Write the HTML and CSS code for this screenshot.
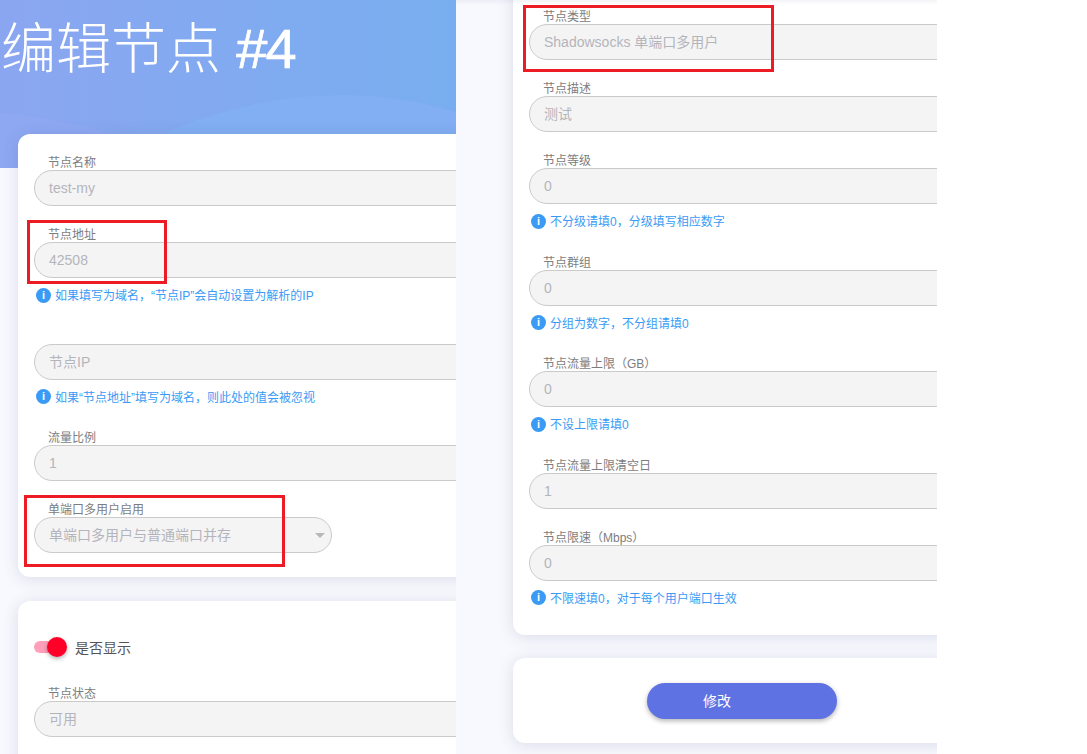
FILE: index.html
```html
<html>
  <head>
    <title>
      编辑节点
    </title>
    <link rel="stylesheet" href="styles.css">
  </head>

  <body>
    <div class="shot">
      <div class="pane pane-left">
        <div class="hero">
          <svg class="waves" width="456" height="168" viewBox="0 0 456 168">
            <path d="M0 113 C40 116 80 124 110 134 L110 168 L0 168 Z" fill="#8ea8f2"/>
            <path d="M163 134 C215 110 280 95 340 95 C385 95 425 102 456 112 L456 134 Z" fill="#82aef3"/>
          </svg>
          <h1 class="title">编辑节点 <b>#4</b></h1>
        </div>

        <div class="card card-first">
          <div class="field">
            <label>节点名称</label>
            <div class="input">test-my</div>
          </div>
          <div class="field">
            <label>节点地址</label>
            <div class="input">42508</div>
            <p class="hint"><span class="info">i</span>如果填写为域名，“节点IP”会自动设置为解析的IP</p>
          </div>
          <div class="field field-nolabel">
            <div class="input">节点IP</div>
            <p class="hint"><span class="info">i</span>如果“节点地址”填写为域名，则此处的值会被忽视</p>
          </div>
          <div class="field field-after-hint">
            <label>流量比例</label>
            <div class="input">1</div>
          </div>
          <div class="field">
            <label>单端口多用户启用</label>
            <div class="input input-select">单端口多用户与普通端口并存<span class="caret"></span></div>
          </div>
          <div class="mark mark-address"></div>
          <div class="mark mark-mu"></div>
        </div>

        <div class="card card-second">
          <div class="toggle-row">
            <span class="toggle"><span class="knob"></span></span>
            <span class="toggle-label">是否显示</span>
          </div>
          <div class="field">
            <label>节点状态</label>
            <div class="input">可用</div>
          </div>
        </div>
      </div>

      <div class="pane pane-right">
        <div class="card card-third">
          <div class="field">
            <label>节点类型</label>
            <div class="input">Shadowsocks 单端口多用户</div>
          </div>
          <div class="field">
            <label>节点描述</label>
            <div class="input">测试</div>
          </div>
          <div class="field">
            <label>节点等级</label>
            <div class="input">0</div>
            <p class="hint"><span class="info">i</span>不分级请填0，分级填写相应数字</p>
          </div>
          <div class="field field-after-hint">
            <label>节点群组</label>
            <div class="input">0</div>
            <p class="hint"><span class="info">i</span>分组为数字，不分组请填0</p>
          </div>
          <div class="field field-after-hint">
            <label>节点流量上限（GB）</label>
            <div class="input">0</div>
            <p class="hint"><span class="info">i</span>不设上限请填0</p>
          </div>
          <div class="field field-after-hint">
            <label>节点流量上限清空日</label>
            <div class="input">1</div>
          </div>
          <div class="field">
            <label>节点限速（Mbps）</label>
            <div class="input">0</div>
            <p class="hint"><span class="info">i</span>不限速填0，对于每个用户端口生效</p>
          </div>
          <div class="mark mark-type"></div>
        </div>

        <div class="card card-submit">
          <button class="submit" type="button">修改</button>
        </div>
      </div>

      <div class="blank"></div>
    </div>
  </body>
</html>
```

FILE: styles.css
```css
html, body {
  margin: 0;
  height: 754px;
  overflow: hidden;
  background-color: #fff;
}

body {
  font-family: "Liberation Sans", "Noto Sans CJK SC", sans-serif;
}

.shot {
  display: flex;
  height: 754px;
}

.pane {
  height: 754px;
  overflow: hidden;
  background-color: #f8f9fe;
  flex-shrink: 0;
}

.pane-left {
  width: 456px;
  position: relative;
}

.pane-right {
  width: 481px;
  position: relative;
}

.pane-right::before {
  content: "";
  position: absolute;
  left: 0;
  right: 0;
  top: 0;
  height: 5px;
  z-index: 1;
  background: linear-gradient(rgba(60, 70, 120, 0.06), rgba(60, 70, 120, 0));
}

.blank {
  flex: 1;
  background-color: #fff;
}

.hero {
  height: 168px;
  position: relative;
  background: linear-gradient(90deg, #8ba6f1, #78aeef);
}

.waves {
  position: absolute;
  left: 0;
  top: 0;
}

.title {
  position: relative;
  margin: 0;
  padding: 13px 0 0 1px;
  font-size: 55px;
  line-height: 72px;
  font-weight: 300;
  color: #fff;
}

.title b {
  font-size: 56px;
  font-weight: 400;
  letter-spacing: -2px;
  -webkit-text-stroke: 0.7px #fff;
}

.card {
  position: relative;
  width: 640px;
  box-sizing: border-box;
  background-color: #fff;
  border-radius: 12px;
  box-shadow: 0 2px 16px rgba(60, 70, 120, 0.16);
}

.card-first {
  margin: -34px 0 0 18px;
  padding: 21px 0 24px 16px;
  height: 443px;
}

.card-second {
  margin: 24px 0 0 18px;
  padding: 36px 0 0 16px;
  height: 300px;
}

.card-third {
  margin: -20px 0 0 57px;
  padding: 29px 0 0 16px;
  height: 655px;
}

.card-submit {
  margin: 23px 0 0 57px;
  height: 85px;
  padding: 25px 0 0 134px;
}

.field {
  margin-bottom: 21px;
}

.field-nolabel {
  margin-top: 38.5px;
}

.field-after-hint {
  margin-top: 23.5px;
}

.field label {
  display: block;
  padding-left: 14px;
  font-size: 12px;
  line-height: 17px;
  height: 15px;
  color: #7d7d7d;
}

.input {
  position: relative;
  box-sizing: border-box;
  height: 36px;
  padding-left: 14px;
  border: 1px solid #cacaca;
  border-radius: 18px;
  background-color: #f4f4f4;
  font-size: 14px;
  line-height: 34px;
  color: #b4b4bc;
}

.input-select {
  width: 298px;
}

.caret {
  position: absolute;
  right: 6px;
  top: 15px;
  border-left: 5px solid transparent;
  border-right: 5px solid transparent;
  border-top: 5px solid #b8b8b8;
}

.hint {
  display: flex;
  align-items: center;
  margin: 9px 0 0 2px;
  font-size: 12px;
  line-height: 18px;
  color: #3a9bf5;
}

.info {
  width: 15px;
  height: 15px;
  margin: 0 4px 2px 0;
  border-radius: 50%;
  background-color: #3a9bf5;
  color: #fff;
  font-size: 11px;
  font-weight: 700;
  line-height: 15px;
  text-align: center;
}

.toggle-row {
  display: flex;
  align-items: center;
  height: 20px;
  margin-bottom: 29px;
}

.toggle {
  position: relative;
  width: 24px;
  height: 12px;
  border-radius: 6px;
  background-color: #ff9fb9;
}

.knob {
  position: absolute;
  left: 13px;
  top: -4px;
  width: 20px;
  height: 20px;
  border-radius: 50%;
  background-color: #ff0029;
  box-shadow: 0 2px 4px rgba(0, 0, 0, 0.3);
}

.toggle-label {
  margin-left: 17px;
  font-size: 14px;
  color: #555;
}

.submit {
  width: 190px;
  height: 36px;
  padding: 0 50px 2px 0;
  border: 0;
  border-radius: 18px;
  background-color: #5e72e4;
  box-shadow: 0 2px 5px rgba(0, 0, 0, 0.3);
  color: #fff;
  font-family: inherit;
  font-size: 14px;
}

.mark {
  position: absolute;
  box-sizing: border-box;
  border: 3px solid #ed1c24;
}

.mark-address {
  left: 9px;
  top: 86px;
  width: 140px;
  height: 64px;
}

.mark-mu {
  left: 6px;
  top: 361px;
  width: 261px;
  height: 72px;
}

.mark-type {
  left: 10px;
  top: 25px;
  width: 251px;
  height: 67px;
}
```
